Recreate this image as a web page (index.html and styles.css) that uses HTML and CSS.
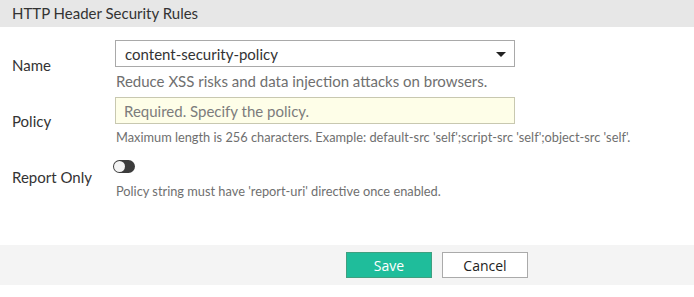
FILE: index.html
```html
<!DOCTYPE html>
<html>
<head>
<meta charset="utf-8">
<link rel="stylesheet" href="styles.css">
</head>
<body>
<div class="dialog">
  <div class="header">HTTP Header Security Rules</div>
  <div class="form">
    <div class="row row-name">
      <div class="label">Name</div>
      <div class="field">
        <div class="select">
          <span>content-security-policy</span>
          <span class="caret"></span>
        </div>
        <div class="help">Reduce XSS risks and data injection attacks on browsers.</div>
      </div>
    </div>
    <div class="row row-policy">
      <div class="label">Policy</div>
      <div class="field">
        <div class="input"><span class="placeholder">Required. Specify the policy.</span></div>
        <div class="help small">Maximum length is 256 characters. Example: default-src 'self';script-src 'self';object-src 'self'.</div>
      </div>
    </div>
    <div class="row row-report">
      <div class="label">Report Only</div>
      <div class="field">
        <div class="toggle"><span class="knob"></span></div>
        <div class="help small">Policy string must have 'report-uri' directive once enabled.</div>
      </div>
    </div>
  </div>
  <div class="footer">
    <button class="btn btn-save">Save</button>
    <button class="btn btn-cancel">Cancel</button>
  </div>
</div>
</body>
</html>
```

FILE: styles.css
```css
html, body {
  margin: 0;
  padding: 0;
  background: #ffffff;
}
body {
  font-family: Lato, "Open Sans", sans-serif;
  color: #333333;
  width: 694px;
  height: 297px;
  overflow: hidden;
}
.header {
  height: 27px;
  background: #e7e7e7;
  font-size: 15px;
  line-height: 27px;
  padding-left: 12px;
  color: #333;
}
.form {
  height: 218px;
  padding-top: 13px;
  box-sizing: border-box;
}
.row {
  display: flex;
  align-items: center;
}
.label {
  width: 103px;
  padding-left: 12px;
  font-size: 15px;
  color: #333;
  flex: none;
}
.field {
  display: flex;
  flex-direction: column;
}
.select {
  width: 400px;
  height: 27px;
  box-sizing: border-box;
  border: 1px solid #a9a9a9;
  display: flex;
  align-items: center;
  justify-content: space-between;
  padding: 0 8px 0 9px;
  font-size: 15px;
  color: #333;
}
.caret {
  width: 0;
  height: 0;
  border-left: 5px solid transparent;
  border-right: 5px solid transparent;
  border-top: 5px solid #222;
  margin-top: 1px;
}
.help {
  color: #6f6f6f;
  font-size: 15px;
  margin-top: 5px;
  padding-left: 1px;
  line-height: 18px;
}
.help.small {
  font-size: 12.8px;
  margin-top: 6px;
  line-height: 15px;
}
.row-policy {
  margin-top: 7px;
}
.input {
  width: 400px;
  height: 27px;
  box-sizing: border-box;
  border: 1px solid #c8c8b0;
  background: #fefee8;
  display: flex;
  align-items: center;
  padding-left: 8px;
  font-size: 15px;
}
.placeholder {
  color: #7c7c7c;
}
.row-report {
  margin-top: 15px;
}
.row-report .label {
  margin-top: -6px;
}
.toggle {
  width: 22px;
  height: 13px;
  border-radius: 7px;
  background: #3c3c3c;
  position: relative;
  margin-left: -2px;
}
.knob {
  position: absolute;
  left: 1px;
  top: 1px;
  width: 11px;
  height: 11px;
  border-radius: 50%;
  background: #f4f4f4;
}
.row-report .help.small {
  margin-top: 11px;
}
.footer {
  height: 40px;
  background: #f4f4f4;
  display: flex;
  align-items: center;
  padding-left: 346px;
  gap: 10px;
}
.btn {
  width: 86px;
  height: 26px;
  box-sizing: border-box;
  font-family: "Open Sans", Lato, sans-serif;
  font-size: 14px;
  padding: 0;
  cursor: pointer;
}
.btn-save {
  background: #1fbd9b;
  border: 1px solid #3fa080;
  color: #ffffff;
}
.btn-cancel {
  background: #ffffff;
  border: 1px solid #aaaaaa;
  color: #222;
}
```
